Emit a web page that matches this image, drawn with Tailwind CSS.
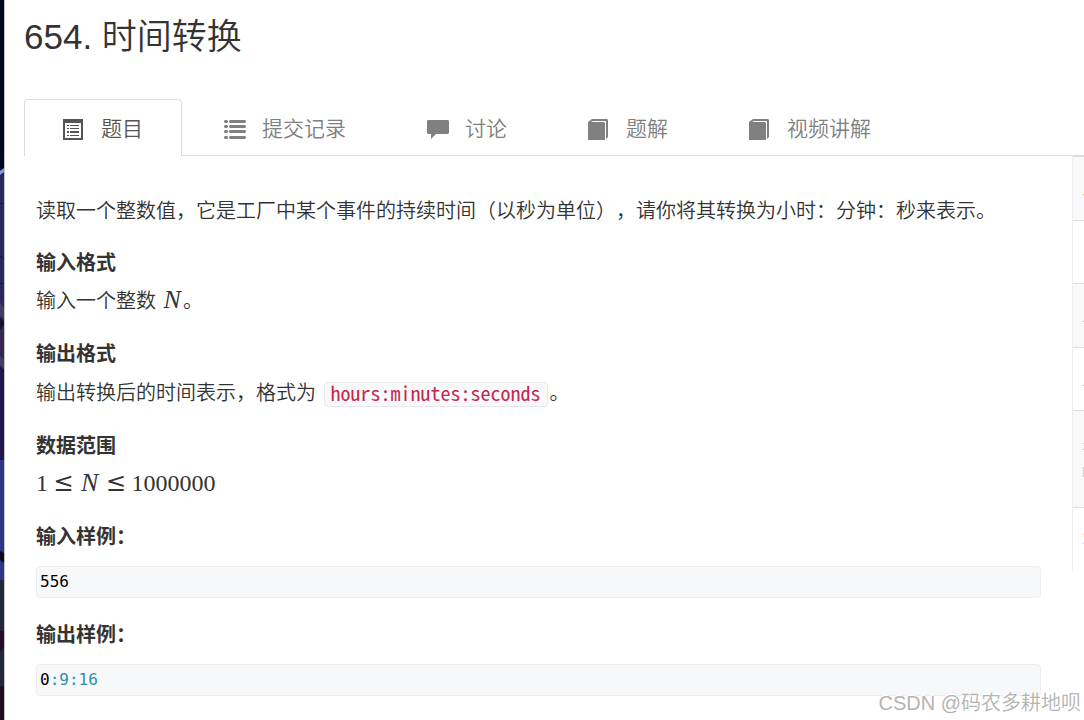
<!DOCTYPE html>
<html lang="zh-CN">
  <head>
    <meta charset="UTF-8" />
    <meta name="viewport" content="width=device-width, initial-scale=1.0" />
    <title>654. 时间转换</title>
    <script src="https://cdn.jsdelivr.net/npm/@tailwindcss/browser@4"></script>
  </head>
  <body
    class="relative flex min-h-screen overflow-hidden bg-white text-[#333] font-['Liberation_Sans','Noto_Sans_CJK_SC',sans-serif]"
  >
    <!-- wallpaper strip beside the page -->
    <svg
      class="w-1 h-screen shrink-0"
      viewBox="0 0 4 720"
      preserveAspectRatio="none"
      aria-hidden="true"
    >
      <rect width="4" height="720" fill="#20164c" />
      <rect width="4" height="170" fill="#020820" />
      <rect y="170" width="4" height="132" fill="#28265c" />
      <path d="M0 171l4-3v4l-4 3z" fill="#7d9be8" />
      <path d="M0 203h4v1H0zM0 256l4 2v1l-4-2zM0 283h4v1H0z" fill="#15163f" />
      <rect y="302" width="4" height="68" fill="#35264f" />
      <path d="M0 303l4 5v11l-4-3zM0 356l4 3v10l-4-4z" fill="#413f66" />
      <path d="M0 317l4 5v3l-4 5zM0 367l4 3v2l-4-3z" fill="#15112e" />
      <rect y="460" width="4" height="120" fill="#2d3683" />
      <path d="M0 551l4 2v10l-4-3z" fill="#0b0a18" />
      <rect y="580" width="4" height="106" fill="#232838" />
      <path d="M0 631h4v17l-4 4z" fill="#260d26" />
      <rect y="686" width="4" height="34" fill="#200d20" />
    </svg>

    <div class="flex-1 min-w-0 border-l border-[#c4c4c4]">
      <h1 class="pl-[19px] pt-4 text-[35px] leading-[42px] font-[350]">654. 时间转换</h1>

      <!-- tabs -->
      <nav
        class="mt-[41px] ml-[19px] flex gap-[3px] border-b border-[#ddd] text-[21px] leading-[30px] text-[#808080] font-[350]"
      >
        <a
          href="#problem"
          class="-mb-px h-[57px] px-[38px] pt-[2px] flex items-center gap-4 rounded-t border border-b-0 border-[#ddd] bg-white text-[#555]"
        >
          <svg class="w-[22px] h-[22px] mt-[2px]" viewBox="0 0 22 22" fill="currentColor" aria-hidden="true">
            <path fill-rule="evenodd" d="M0 0h20v21H0zM2 4v15h16V4z" />
            <path d="M4 6h2v1H4zM7 6h9v1H7zM4 9h2v1H4zM7 9h9v1H7zM4 12h2v2H4zM7 12h9v2H7zM4 16h2v1H4zM7 16h9v1H7z" />
          </svg>
          题目
        </a>
        <a href="#submissions" class="h-[56px] px-[39px] pt-1 flex items-center gap-4">
          <svg class="w-[22px] h-[22px] mt-[2px]" viewBox="0 0 22 22" fill="currentColor" aria-hidden="true">
            <path d="M0 2l1-1h2l1 1v1L3 4H1L0 3zM5 2l1-1h15l1 1v1l-1 1H6L5 3zM0 7l1-1h2l1 1v1L3 9H1L0 8zM5 7l1-1h15l1 1v1l-1 1H6L5 8zM0 12l1-1h2l1 1v1l-1 1H1l-1-1zM5 12l1-1h15l1 1v1l-1 1H6l-1-1zM0 18l1-1h2l1 1v1l-1 1H1l-1-1zM5 18l1-1h15l1 1v1l-1 1H6l-1-1z" />
          </svg>
          提交记录
        </a>
        <a href="#discussion" class="h-[56px] px-[39px] pt-1 flex items-center gap-4">
          <svg class="w-[22px] h-[22px] mt-[2px]" viewBox="0 0 22 22" fill="currentColor" aria-hidden="true">
            <path d="M1 1h20l1 1v12l-1 1H9l-5 5v-5H1l-1-1V2z" />
          </svg>
          讨论
        </a>
        <a href="#solutions" class="h-[56px] px-[39px] pt-1 flex items-center gap-4">
          <svg class="w-[22px] h-[22px] mt-[2px]" viewBox="0 0 22 22" fill="currentColor" aria-hidden="true">
            <path d="M0 3l4-3h15l1 1v17l-2 2V2H5L3 3h13l1 1v17H0z" />
          </svg>
          题解
        </a>
        <a href="#videos" class="h-[56px] px-[39px] pt-1 flex items-center gap-4">
          <svg class="w-[22px] h-[22px] mt-[2px]" viewBox="0 0 22 22" fill="currentColor" aria-hidden="true">
            <path d="M0 3l4-3h15l1 1v17l-2 2V2H5L3 3h13l1 1v17H0z" />
          </svg>
          视频讲解
        </a>
      </nav>

      <div class="flex items-start">
        <!-- problem statement -->
        <main class="flex-1 min-w-0 px-[31px] pt-10 text-xl [text-spacing-trim:space-all]">
          <p class="leading-[30px] font-[350]">
            读取一个整数值，它是工厂中某个事件的持续时间（以秒为单位），请你将其转换为小时：分钟：秒来表示。
          </p>

          <h2 class="mt-[26px] mb-3 leading-[22px] font-bold">输入格式</h2>
          <p class="h-[31px] leading-[30px] font-[350]">
            输入一个整数
            <i class="px-[2px] text-[26px] leading-[28px] font-normal font-['Liberation_Serif',serif]">N</i>。
          </p>

          <h2 class="mt-[26px] mb-3 leading-[22px] font-bold">输出格式</h2>
          <p class="h-8 leading-8 font-[350]">
            输出转换后的时间表示，格式为
            <code
              class="inline-block mx-[2px] px-[6px] h-[25px] leading-[19px] align-middle rounded border border-[#e8e8e8] bg-[#f9f9f9] text-xl font-normal text-[#c7254e] font-['Noto_Sans_Mono_CJK_SC','DejaVu_Sans_Mono',monospace]"
              >hours:minutes:seconds</code
            >。
          </p>

          <h2 class="mt-[26px] mb-3 leading-[22px] font-bold">数据范围</h2>
          <p class="h-[31px] pb-[3px] flex items-center gap-[6px] text-2xl leading-[30px] font-['Liberation_Serif',serif]">
            <span>1</span>
            <span class="font-['DejaVu_Math_TeX_Gyre','DejaVu_Serif',serif]">≤</span>
            <i class="px-[2px] text-[26px] leading-[28px]">N</i>
            <span class="font-['DejaVu_Math_TeX_Gyre','DejaVu_Serif',serif]">≤</span>
            <span>1000000</span>
          </p>

          <h2 class="mt-[26px] mb-[18px] leading-[22px] font-bold">输入样例：</h2>
          <pre
            class="h-8 px-[3px] rounded border border-[#eee] bg-[#f7f8fa] text-base leading-[30px] text-black font-['DejaVu_Sans_Mono',monospace]"
          >556</pre>

          <h2 class="mt-[26px] mb-[18px] leading-[22px] font-bold">输出样例：</h2>
          <pre
            class="h-8 px-[3px] rounded border border-[#eee] bg-[#f7f8fa] text-base leading-[30px] text-black font-['DejaVu_Sans_Mono',monospace]"
          >0<span class="text-[#318fae]">:9:16</span></pre>
        </main>

        <!-- edge of the side table -->
        <aside class="w-3 shrink-0 border-l border-[#eee]">
          <div class="h-[64px] flex flex-col items-end justify-center border-t border-[#ddd] bg-[#f9f9f9]">
            <span class="w-px h-px mt-3 bg-[#f0ad4e]"></span>
          </div>
          <div class="h-[63px] border-t border-[#ddd]"></div>
          <div class="h-[64px] flex flex-col items-end justify-center border-t border-[#ddd] bg-[#f9f9f9]">
            <span class="w-px h-px mt-3 bg-[#f0ad4e]"></span>
          </div>
          <div class="h-[63px] flex flex-col items-end justify-center border-t border-[#ddd]">
            <span class="w-px h-px mt-3 bg-[#f0ad4e]"></span>
          </div>
          <div class="h-[97px] flex flex-col items-end gap-[5px] pt-8 border-t border-[#ddd] bg-[#f9f9f9]">
            <span class="w-px h-px bg-[#fbd28c]"></span>
            <span class="w-px h-px bg-[#f0ad4e]"></span>
            <span class="w-px h-[10px] mt-3 bg-[#ccc]"></span>
          </div>
          <div class="h-[64px] flex flex-col items-end gap-2 pt-[26px] border-t border-[#ddd]">
            <span class="w-px h-px bg-[#fbd28c]"></span>
            <span class="w-px h-px bg-[#fbd28c]"></span>
          </div>
        </aside>
      </div>
    </div>

    <!-- watermark -->
    <span
      class="absolute right-[3px] bottom-[3px] text-xl leading-[28px] font-[350] text-[#b4b4b4] text-shadow-[-1px_-1px_0_#fff]"
      >CSDN @码农多耕地呗</span
    >
  </body>
</html>
